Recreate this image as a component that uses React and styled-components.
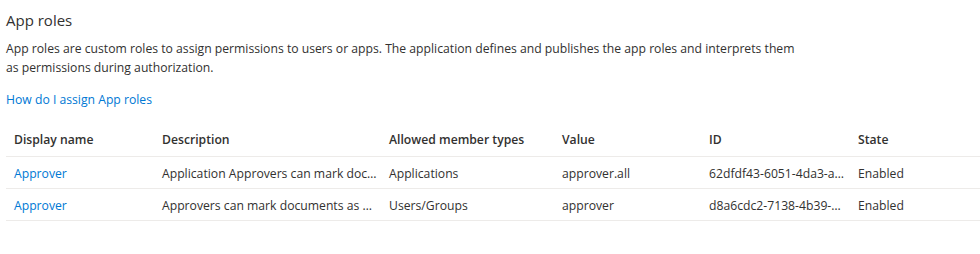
import React from "react";
import styled, { createGlobalStyle } from "styled-components";

const roles = [
  {
    name: "Approver",
    description: "Application Approvers can mark documents as approved",
    types: "Applications",
    value: "approver.all",
    id: "62dfdf43-6051-4da3-a9b1-2c3d4e5f6a7b",
    state: "Enabled",
  },
  {
    name: "Approver",
    description: "Approvers can mark documents as approved",
    types: "Users/Groups",
    value: "approver",
    id: "d8a6cdc2-7138-4b39-8c1d-9e0f1a2b3c4d",
    state: "Enabled",
  },
];

const columns = [
  { label: "Display name", width: 148 },
  { label: "Description", width: 227 },
  { label: "Allowed member types", width: 173 },
  { label: "Value", width: 147 },
  { label: "ID", width: 149 },
  { label: "State", width: 156 },
];

const App = () => {
  return (
    <>
      <GlobalStyle />
      <Page>
        <Title>App roles</Title>
        <Intro>
          App roles are custom roles to assign permissions to users or apps. The
          application defines and publishes the app roles and interprets them as
          permissions during authorization.
        </Intro>
        <HelpLink href="#">How do I assign App roles</HelpLink>

        <Table>
          <colgroup>
            {columns.map((c) => (
              <col key={c.label} style={{ width: c.width }} />
            ))}
          </colgroup>
          <thead>
            <tr>
              {columns.map((c) => (
                <HeadCell key={c.label}>{c.label}</HeadCell>
              ))}
            </tr>
          </thead>
          <tbody>
            {roles.map((r) => (
              <tr key={r.id}>
                <Cell>
                  <NameLink href="#">{r.name}</NameLink>
                </Cell>
                <Cell>{r.description}</Cell>
                <Cell>{r.types}</Cell>
                <Cell>{r.value}</Cell>
                <Cell>{r.id}</Cell>
                <Cell>{r.state}</Cell>
              </tr>
            ))}
          </tbody>
        </Table>
      </Page>
    </>
  );
};

const GlobalStyle = createGlobalStyle`
  html, body {
    margin: 0;
    background: #ffffff;
  }
  body {
    font-family: "Open Sans", "Noto Sans", sans-serif;
    color: #323130;
  }
`;

const Page = styled.div`
  padding: 9px 0 0 6px;
  overflow: hidden;
`;

const Title = styled.h2`
  margin: 0;
  font-size: 15px;
  font-weight: 400;
  line-height: 22px;
`;

const Intro = styled.p`
  margin: 8px 0 0;
  max-width: 800px;
  font-size: 12.2px;
  line-height: 19px;
`;

const HelpLink = styled.a`
  display: inline-block;
  margin-top: 13px;
  font-size: 12.2px;
  line-height: 19px;
  color: #0078d4;
  text-decoration: none;
`;

const Table = styled.table`
  margin-top: 13px;
  border-collapse: collapse;
  table-layout: fixed;
  width: 1000px;
  font-size: 12.2px;
`;

const HeadCell = styled.th`
  padding: 0 8px;
  height: 34px;
  text-align: left;
  font-weight: 600;
  border-bottom: 1px solid #edebe9;
  white-space: nowrap;
`;

const Cell = styled.td`
  padding: 1px 8px 0 8px;
  height: 30px;
  border-bottom: 1px solid #edebe9;
  white-space: nowrap;
  overflow: hidden;
  text-overflow: ellipsis;

  &:nth-child(2),
  &:nth-child(5) {
    padding-right: 3px;
  }
`;

const NameLink = styled.a`
  color: #0078d4;
  text-decoration: none;
`;

export default App;
